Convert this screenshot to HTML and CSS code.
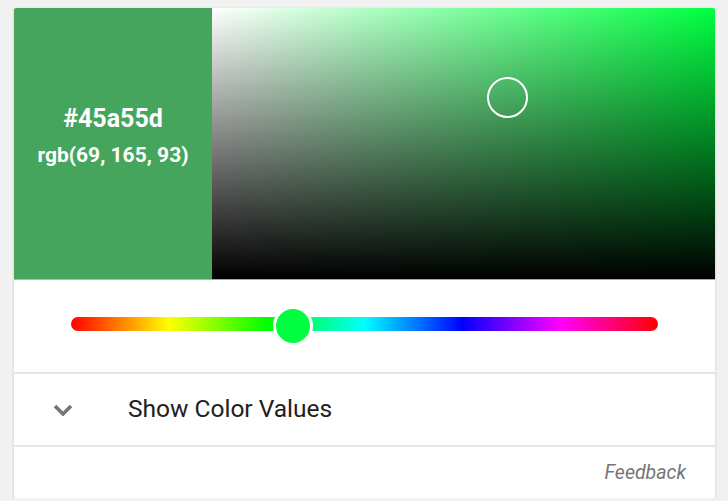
FILE: index.html
```html
<!DOCTYPE html>
<html>
<head>
<meta charset="utf-8">
<link rel="stylesheet" href="styles.css">
</head>
<body>
<div class="card">
  <div class="picker">
    <div class="swatch">
      <div class="hex">#45a55d</div>
      <div class="rgb">rgb(69, 165, 93)</div>
    </div>
    <div class="sv">
      <div class="sv-cursor"></div>
    </div>
  </div>
  <div class="slider-row">
    <div class="hue-track">
      <div class="hue-thumb"></div>
    </div>
  </div>
  <div class="toggle-row">
    <svg class="chevron" width="20" height="12" viewBox="0 0 20 12"><path d="M2 2 L10 10 L18 2" fill="none" stroke="#757575" stroke-width="3.6"/></svg>
    <span class="toggle-label">Show Color Values</span>
  </div>
  <div class="feedback-row">
    <span class="feedback">Feedback</span>
  </div>
</div>
</body>
</html>
```
FILE: styles.css
```css
html, body {
  margin: 0;
  padding: 0;
  background: #f1f1f1;
  font-family: Roboto, "Liberation Sans", sans-serif;
}
.card {
  margin: 8px 0 0 14px;
  width: 701px;
  background: #fff;
  border-radius: 2px;
  box-shadow: 0 1px 3px rgba(0,0,0,0.18);
  overflow: hidden;
}
.picker {
  display: flex;
  height: 272px;
}
.swatch {
  width: 198px;
  background: #45a55d;
  color: #fff;
  font-weight: 700;
  display: flex;
  flex-direction: column;
  align-items: center;
  justify-content: center;
  padding-bottom: 14px;
  box-sizing: border-box;
  border-bottom: 1px solid #8fcf9d;
}
.hex {
  font-size: 25px;
  line-height: 30px;
}
.rgb {
  font-size: 21px;
  line-height: 28px;
  margin-top: 7px;
}
.sv {
  flex: 1;
  position: relative;
  background: linear-gradient(to top, #000, rgba(0,0,0,0)), linear-gradient(to right, #fff, #00ff40);
  border-bottom: 1px solid #a8a8a8;
}
.sv-cursor {
  position: absolute;
  left: 275px;
  top: 69px;
  width: 37px;
  height: 37px;
  border: 2.5px solid #fff;
  border-radius: 50%;
}
.slider-row {
  height: 94px;
  border-bottom: 2px solid #e6e6e6;
  box-sizing: border-box;
  padding-top: 37px;
}
.hue-track {
  position: relative;
  margin-left: 57px;
  width: 587px;
  height: 14px;
  border-radius: 7px;
  background: linear-gradient(to right, #ff0000 0%, #ffff00 16.67%, #00ff00 33.33%, #00ffff 50%, #0000ff 66.67%, #ff00ff 83.33%, #ff0000 100%);
}
.hue-thumb {
  position: absolute;
  left: 202px;
  top: -11px;
  width: 34px;
  height: 34px;
  border: 3px solid #fff;
  border-radius: 50%;
  background: #00ff40;
}
.toggle-row {
  height: 73px;
  border-bottom: 2px solid #e6e6e6;
  box-sizing: border-box;
  display: flex;
  align-items: center;
  padding-left: 39px;
  padding-bottom: 3px;
}
.chevron {
  display: block;
  margin-top: 3px;
}
.toggle-label {
  margin-left: 55px;
  font-size: 24.5px;
  color: #212121;
}
.feedback-row {
  height: 51px;
  display: flex;
  align-items: center;
  justify-content: flex-end;
  padding-right: 29px;
}
.feedback {
  font-style: italic;
  font-size: 19.5px;
  color: #757575;
}
```
